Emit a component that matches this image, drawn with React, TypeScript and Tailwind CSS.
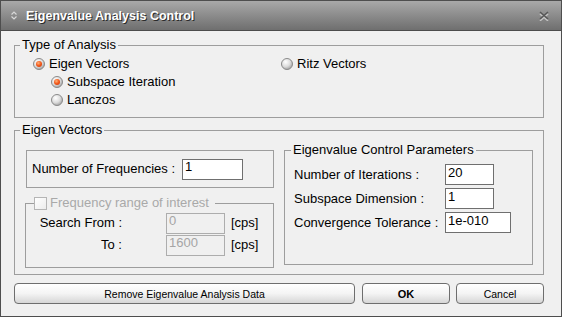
import React from "react";

function Radio({ checked }: { checked?: boolean }) {
  return (
    <svg width="12" height="12" viewBox="0 0 12 12" className="shrink-0">
      <defs>
        <radialGradient id="rb" cx="38%" cy="32%" r="75%">
          <stop offset="0" stopColor="#ffffff" />
          <stop offset="0.55" stopColor="#dcdcdc" />
          <stop offset="1" stopColor="#9a9a9a" />
        </radialGradient>
        <radialGradient id="rd" cx="40%" cy="35%" r="70%">
          <stop offset="0" stopColor="#ffb27a" />
          <stop offset="0.6" stopColor="#f25a1c" />
          <stop offset="1" stopColor="#d8400c" />
        </radialGradient>
      </defs>
      <circle cx="6" cy="6" r="5.5" fill="url(#rb)" stroke="#8a8a8a" strokeWidth="1" />
      {checked && <circle cx="6" cy="6" r="3" fill="url(#rd)" />}
    </svg>
  );
}

function RadioRow({ label, checked }: { label: string; checked?: boolean }) {
  return (
    <div className="flex items-center gap-[4px] h-[18px]">
      <Radio checked={checked} />
      <span className="whitespace-nowrap">{label}</span>
    </div>
  );
}

function TextBox({
  value,
  width,
  disabled,
}: {
  value: string;
  width: string;
  disabled?: boolean;
}) {
  return (
    <input
      readOnly
      value={value}
      className={
        width +
        " h-[21px] pl-[2px] pb-[5px] text-[13px] outline-none " +
        (disabled
          ? "border border-[#adadad] bg-[#f0f0f0] text-[#a5a5a5]"
          : "border border-[#6f6f6f] bg-white text-black")
      }
    />
  );
}

function Btn({ label, width, bold }: { label: string; width: string; bold?: boolean }) {
  return (
    <button
      className={
        width +
        " h-[21px] rounded-[4px] border border-[#6e6e6e] bg-gradient-to-b from-[#ffffff] via-[#f4f4f4] to-[#d6d6d6] text-black flex items-center justify-center " +
        (bold ? "font-bold text-[11px]" : "text-[10.5px]")
      }
    >
      {label}
    </button>
  );
}

function TitleBar() {
  return (
    <div className="h-[30px] shrink-0 flex items-center pl-[10px] pr-[12px] bg-gradient-to-b from-[#a9a9a9] to-[#6f6f6f] border-b border-[#4c4c4c]">
      <svg width="6" height="9" viewBox="0 0 6 9" className="shrink-0">
        <path d="M0.5 3.5 L3 1 L5.5 3.5" fill="none" stroke="#d8d8d8" strokeWidth="1.2" />
        <path d="M0.5 5.5 L3 8 L5.5 5.5" fill="none" stroke="#d8d8d8" strokeWidth="1.2" />
      </svg>
      <span className="ml-[9px] text-white font-bold text-[12.5px] [text-shadow:1px_1px_0_#2a2a2a]">
        Eigenvalue Analysis Control
      </span>
      <svg width="10" height="10" viewBox="0 0 10 10" className="ml-auto">
        <path d="M1 2 L9 9 M9 2 L1 9" stroke="#c4c4c4" strokeWidth="1.6" transform="translate(0 0.8)" />
        <path d="M1 1 L9 8 M9 1 L1 8" stroke="#585858" strokeWidth="1.6" />
      </svg>
    </div>
  );
}

export default function App() {
  return (
    <div className="w-[562px] h-[317px] flex flex-col bg-[#f0f0f0] border border-[#4e4e4e] font-['Liberation_Sans',Arial,sans-serif] text-[13px] leading-[14px] text-black overflow-hidden">
      <TitleBar />
      <div className="flex flex-col pl-[13px] pr-[17px]">
        <fieldset className="mt-[7px] h-[80px] border border-[#9d9d9d]">
          <legend className="ml-[5px] px-[2px]">Type of Analysis</legend>
          <div className="flex pt-[3px] pl-[18px]">
            <div className="w-[248px] flex flex-col">
              <RadioRow checked label="Eigen Vectors" />
              <div className="pl-[18px] flex flex-col">
                <RadioRow checked label="Subspace Iteration" />
                <RadioRow label="Lanczos" />
              </div>
            </div>
            <RadioRow label="Ritz Vectors" />
          </div>
        </fieldset>

        <fieldset className="mt-[5px] h-[152px] border border-[#9d9d9d]">
          <legend className="ml-[5px] px-[2px]">Eigen Vectors</legend>
          <div className="flex items-start mt-[6px] pl-[10px]">
            <div className="flex flex-col pt-[7px]">
              <div className="ml-[1px] w-[248px] h-[38px] border border-[#9d9d9d] flex items-center pl-[5px]">
                <span className="w-[150px] whitespace-nowrap">Number of Frequencies :</span>
                <TextBox value="1" width="w-[61px]" />
              </div>
              <fieldset className="mt-[8px] w-[249px] h-[72px] border border-[#9d9d9d]">
                <legend className="ml-[8px] pr-[6px] flex items-center gap-[3px] text-[#a9a9a9]">
                  <span className="w-[13px] h-[13px] border border-[#b5b5b5] bg-gradient-to-br from-[#ffffff] to-[#ececec]" />
                  <span className="whitespace-nowrap">Frequency range of interest</span>
                </legend>
                <div className="flex flex-col pt-[2px] pl-[10px]">
                  <div className="h-[22px] flex items-center">
                    <span className="w-[86px] text-right whitespace-nowrap">Search From :</span>
                    <div className="ml-[44px]">
                      <TextBox value="0" width="w-[59px]" disabled />
                    </div>
                    <span className="ml-[6px]">[cps]</span>
                  </div>
                  <div className="h-[22px] flex items-center">
                    <span className="w-[86px] text-right whitespace-nowrap">To :</span>
                    <div className="ml-[44px]">
                      <TextBox value="1600" width="w-[59px]" disabled />
                    </div>
                    <span className="ml-[6px]">[cps]</span>
                  </div>
                </div>
              </fieldset>
            </div>

            <fieldset className="ml-[10px] w-[249px] h-[122px] border border-[#9d9d9d]">
              <legend className="ml-[6px] px-[2px]">Eigenvalue Control Parameters</legend>
              <div className="flex flex-col gap-[3px] pt-[7px] pl-[9px]">
                <div className="h-[21px] flex items-center">
                  <span className="w-[151px] whitespace-nowrap">Number of Iterations :</span>
                  <TextBox value="20" width="w-[49px]" />
                </div>
                <div className="h-[21px] flex items-center">
                  <span className="w-[151px] whitespace-nowrap">Subspace Dimension :</span>
                  <TextBox value="1" width="w-[49px]" />
                </div>
                <div className="h-[21px] flex items-center">
                  <span className="w-[151px] whitespace-nowrap">Convergence Tolerance :</span>
                  <TextBox value="1e-010" width="w-[66px]" />
                </div>
              </div>
            </fieldset>
          </div>
        </fieldset>

        <div className="mt-[8px] flex">
          <Btn label="Remove Eigenvalue Analysis Data" width="w-[341px]" />
          <div className="ml-[7px]">
            <Btn label="OK" width="w-[88px]" bold />
          </div>
          <div className="ml-[6px]">
            <Btn label="Cancel" width="w-[88px]" />
          </div>
        </div>
      </div>
    </div>
  );
}
